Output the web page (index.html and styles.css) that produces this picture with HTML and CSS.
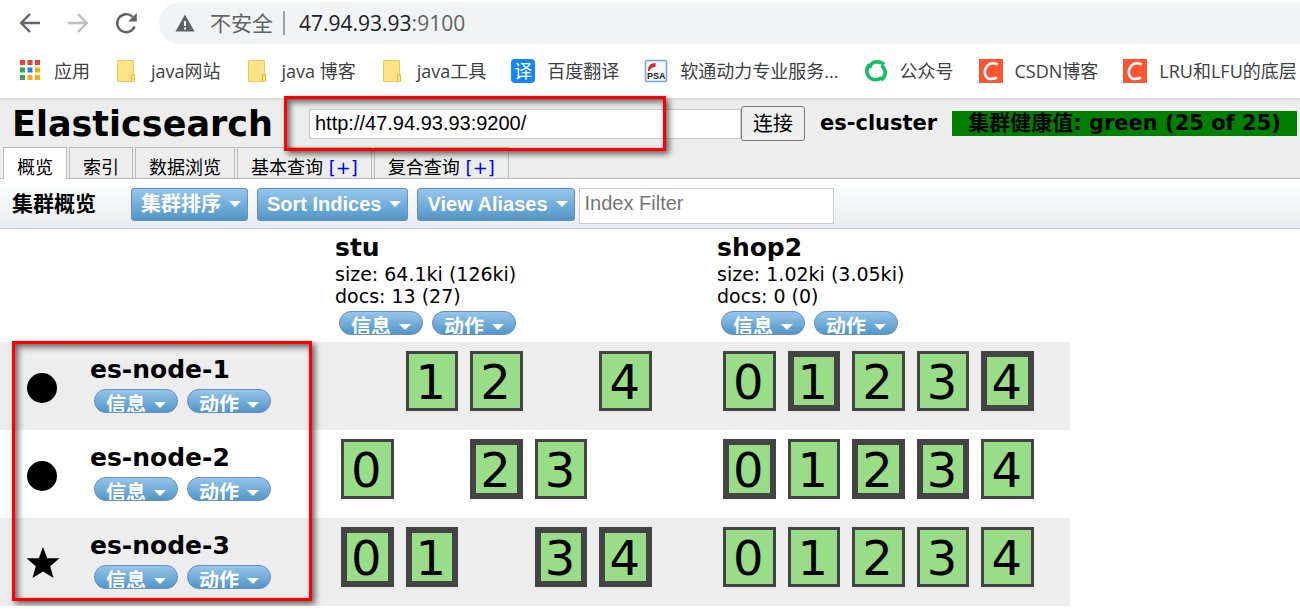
FILE: index.html
```html
<!DOCTYPE html>
<html lang="zh-CN">
<head>
    <meta charset="UTF-8">
    <meta name="viewport" content="width=device-width, initial-scale=1.0">
    <title>elasticsearch-head</title>
    <link rel="stylesheet" href="styles.css">
</head>
<body>
    <!-- Browser bars -->
    <div class="browser">
        <div class="nav-bar">
            <button class="nav-btn" aria-label="后退">
                <svg width="24" height="24" viewBox="0 0 24 24" fill="none" stroke="#5f6368" stroke-width="2.4"><path d="M22 12H3.5M12 3L3.2 12L12 21"/></svg>
            </button>
            <button class="nav-btn" aria-label="前进">
                <svg width="24" height="24" viewBox="0 0 24 24" fill="none" stroke="#bdbfc1" stroke-width="2.4"><path d="M2 12H20.5M12 3L20.8 12L12 21"/></svg>
            </button>
            <button class="nav-btn" aria-label="刷新">
                <svg width="24" height="24" viewBox="0 0 24 24" fill="none" stroke="#5f6368" stroke-width="2.4"><path d="M20.6 15.5A9 9 0 1 1 18.6 5.8"/><path d="M22.8 2V10.6H14.2Z" fill="#5f6368" stroke="none"/></svg>
            </button>
            <div class="address">
                <svg width="20" height="18" viewBox="0 0 20 18"><path d="M10 0.5L19.5 17.5H0.5Z" fill="#5f6368"/><path d="M9 7H11V12H9ZM9 13.5H11V15.5H9Z" fill="#f1f3f4"/></svg>
                <span class="insecure">不安全</span>
                <span class="host">47.94.93.93<span class="port">:9100</span></span>
            </div>
        </div>
        <nav class="bookmarks">
            <a href="#"><svg class="icon" viewBox="0 0 24 24"><path fill="#ea4335" d="M2 1h5v5H2zM9.500 1h5v5h-5zM17 1h5v5h-5z"/><path fill="#34a853" d="M2 8.500h5v5H2zM2 16h5v5H2z"/><path fill="#1a83f0" d="M9.500 8.500h5v5h-5z"/><path fill="#fbab05" d="M17 8.500h5v5h-5zM9.500 16h5v5h-5zM17 16h5v5h-5z"/></svg>应用</a>
            <a href="#"><svg class="icon" viewBox="0 0 24 24"><path fill="#ffe28a" stroke="#f0cd52" d="M2.500 1.500H18.500V15.500H19.500V22.500H2.500Z"/><path fill="none" stroke="#dfb72d" d="M16.500 22V17.500Q16.500 15.500 18 15.500Q19.500 15.500 19.500 17.500V22"/></svg>java网站</a>
            <a href="#"><svg class="icon" viewBox="0 0 24 24"><path fill="#ffe28a" stroke="#f0cd52" d="M2.500 1.500H18.500V15.500H19.500V22.500H2.500Z"/><path fill="none" stroke="#dfb72d" d="M16.500 22V17.500Q16.500 15.500 18 15.500Q19.500 15.500 19.500 17.500V22"/></svg>java 博客</a>
            <a href="#"><svg class="icon" viewBox="0 0 24 24"><path fill="#ffe28a" stroke="#f0cd52" d="M2.500 1.500H18.500V15.500H19.500V22.500H2.500Z"/><path fill="none" stroke="#dfb72d" d="M16.500 22V17.500Q16.500 15.500 18 15.500Q19.500 15.500 19.500 17.500V22"/></svg>java工具</a>
            <a href="#"><span class="icon translate">译</span>百度翻译</a>
            <a href="#"><svg class="icon" viewBox="0 0 24 24"><rect x="1.500" y="1.500" width="21" height="21" rx="2" fill="#f4f6f8" stroke="#6fa5dc" stroke-width="1.500"/><path fill="#d9232b" d="M4 12Q4 4 11.500 4V8Q6.500 8 5.500 12Z"/><text class="psa" x="3" y="20">PSA</text></svg>软通动力专业服务...</a>
            <a href="#"><svg class="icon" viewBox="0 0 24 24" fill="none" stroke="#0fbf60" stroke-width="3.600"><path d="M5.500 9Q7 3 13 2.800Q17 2.800 20 5.500"/><path d="M17.500 6.500Q21.500 10 21.200 14.500Q20.500 19 17 21"/><path d="M17.500 18.500Q12 22.500 7 19.500Q3 17 2.800 11.500Q3 8 6 5.500"/></svg>公众号</a>
            <a href="#"><svg class="icon" viewBox="0 0 24 24"><path fill="#fc5531" d="M0 0H24V24H0Z"/><path fill="none" stroke="#fff" stroke-width="2.600" d="M18.800 5.500Q12 2.500 8.500 6.500Q5 11 6 15Q7.500 20.500 13 19.800Q16 19.500 18 18.500"/></svg>CSDN博客</a>
            <a href="#"><svg class="icon" viewBox="0 0 24 24"><path fill="#fc5531" d="M0 0H24V24H0Z"/><path fill="none" stroke="#fff" stroke-width="2.600" d="M18.800 5.500Q12 2.500 8.500 6.500Q5 11 6 15Q7.500 20.500 13 19.800Q16 19.500 18 18.500"/></svg>LRU和LFU的底层</a>
        </nav>
    </div>

    <!-- Cluster connection and tabs -->
    <header class="header">
        <div class="connect">
            <h1>Elasticsearch</h1>
            <form class="connect-form">
                <input type="text" class="url" aria-label="URL" value="http://47.94.93.93:9200/">
                <button type="button" class="connect-btn">连接</button>
                <div class="mark mark-url"></div>
            </form>
            <span class="cluster-name">es-cluster</span>
            <span class="health">集群健康值: green (25 of 25)</span>
        </div>
        <nav class="tabs">
            <a href="#" class="tab active">概览</a>
            <a href="#" class="tab">索引</a>
            <a href="#" class="tab">数据浏览</a>
            <a href="#" class="tab">基本查询 <span class="plus">[+]</span></a>
            <a href="#" class="tab">复合查询 <span class="plus">[+]</span></a>
        </nav>
    </header>

    <div class="toolbar">
        <h2>集群概览</h2>
        <button class="menu-btn">集群排序</button>
        <button class="menu-btn">Sort Indices</button>
        <button class="menu-btn">View Aliases</button>
        <input type="text" class="filter" aria-label="Index Filter" placeholder="Index Filter">
    </div>

    <!-- Nodes and shards -->
    <main class="overview">
        <table class="cluster">
            <thead>
                <tr>
                    <td class="col-icon"></td>
                    <td class="col-node"></td>
                    <th class="col-index" scope="col">
                        <div class="name">stu</div>
                        <div class="stat">size: 64.1ki (126ki)</div>
                        <div class="stat">docs: 13 (27)</div>
                        <div class="pills"><button class="pill">信息</button><button class="pill">动作</button></div>
                    </th>
                    <th scope="col">
                        <div class="name">shop2</div>
                        <div class="stat">size: 1.02ki (3.05ki)</div>
                        <div class="stat">docs: 0 (0)</div>
                        <div class="pills"><button class="pill">信息</button><button class="pill">动作</button></div>
                    </th>
                </tr>
            </thead>
            <tbody>
                <tr>
                    <td class="state"><svg width="34" height="34" viewBox="0 0 34 34"><circle cx="16" cy="16" r="15"/></svg></td>
                    <th scope="row">
                        <div class="name">es-node-1</div>
                        <div class="pills"><button class="pill">信息</button><button class="pill">动作</button></div>
                    </th>
                    <td><div class="shards"><span></span><span class="shard">1</span><span class="shard">2</span><span></span><span class="shard">4</span></div></td>
                    <td><div class="shards"><span class="shard">0</span><span class="shard primary">1</span><span class="shard">2</span><span class="shard">3</span><span class="shard primary">4</span></div></td>
                </tr>
                <tr>
                    <td class="state"><svg width="34" height="34" viewBox="0 0 34 34"><circle cx="16" cy="16" r="15"/></svg></td>
                    <th scope="row">
                        <div class="name">es-node-2</div>
                        <div class="pills"><button class="pill">信息</button><button class="pill">动作</button></div>
                    </th>
                    <td><div class="shards"><span class="shard">0</span><span></span><span class="shard primary">2</span><span class="shard">3</span><span></span></div></td>
                    <td><div class="shards"><span class="shard primary">0</span><span class="shard">1</span><span class="shard primary">2</span><span class="shard primary">3</span><span class="shard">4</span></div></td>
                </tr>
                <tr>
                    <td class="state"><svg width="34" height="34" viewBox="0 0 34 34"><path d="M17 -1L21.200 10.200H33.500L24.200 18.200L27.500 30L17 23.500L6.500 30L9.800 18.200L0.500 10.200H12.800Z"/></svg></td>
                    <th scope="row">
                        <div class="name">es-node-3</div>
                        <div class="pills"><button class="pill">信息</button><button class="pill">动作</button></div>
                    </th>
                    <td><div class="shards"><span class="shard primary">0</span><span class="shard primary">1</span><span></span><span class="shard primary">3</span><span class="shard primary">4</span></div></td>
                    <td><div class="shards"><span class="shard">0</span><span class="shard">1</span><span class="shard">2</span><span class="shard">3</span><span class="shard">4</span></div></td>
                </tr>
            </tbody>
        </table>
        <div class="mark mark-nodes"></div>
    </main>
</body>
</html>
```
FILE: styles.css
```css
* {
    box-sizing: border-box;
}
body {
    margin: 0;
    background: #fff;
    color: #000;
    font-family: Verdana, "DejaVu Sans", "Noto Sans CJK SC", sans-serif;
    font-size: 18px;
    overflow: hidden;
}
h1, h2 {
    margin: 0;
}
a {
    color: inherit;
    text-decoration: none;
}
button {
    cursor: pointer;
}

/* Browser bars */
.browser {
    font-family: "Open Sans", "Noto Sans CJK SC", sans-serif;
    border-bottom: 2px solid #dadce0;
}
.nav-bar {
    display: flex;
    align-items: center;
    gap: 24px;
    padding: 2px 0 0 18px;
    height: 44px;
}
.nav-btn {
    width: 24px;
    height: 24px;
    padding: 0;
    border: none;
    background: none;
}
.nav-btn svg {
    display: block;
}
.address {
    flex: 1;
    display: flex;
    align-items: center;
    height: 42px;
    padding-left: 16px;
    margin-left: -3px;
    background: #f1f3f4;
    border-radius: 21px 0 0 21px;
    font-size: 21px;
    line-height: 24px;
    color: #202124;
}
.insecure {
    margin-left: 15px;
    padding-right: 10px;
    border-right: 2px solid #9aa0a6;
    color: #5f6368;
}
.host {
    margin-left: 14px;
}
.port {
    color: #5f6368;
}
.bookmarks {
    display: flex;
    gap: 25px;
    height: 54px;
    padding: 7px 0 0 18px;
    overflow: hidden;
    white-space: nowrap;
    font-size: 18px;
    line-height: 24px;
    color: #3c4043;
}
.bookmarks a {
    flex: none;
    display: flex;
    align-items: center;
    gap: 12px;
    height: 40px;
}
.icon {
    width: 24px;
    height: 24px;
}
.translate {
    border-radius: 4px;
    background: #1487f5;
    color: #fff;
    text-align: center;
}
.psa {
    font: bold 9px "Liberation Sans", sans-serif;
    fill: #222;
}

/* Header */
.header {
    background: #ededed;
}
.connect {
    display: flex;
    align-items: center;
    height: 47px;
    padding-left: 12px;
    white-space: nowrap;
}
h1 {
    width: 297px;
    font-size: 35px;
    line-height: 42px;
}
.connect-form {
    position: relative;
    display: flex;
    align-items: center;
    width: 496px;
}
.url {
    flex: 1;
    height: 30px;
    padding: 0 5px;
    border: 1px solid #ccc;
    font-family: "Liberation Sans", sans-serif;
    font-size: 20px;
}
.connect-btn {
    width: 64px;
    height: 35px;
    padding: 0;
    border: 1px solid #767676;
    border-radius: 3px;
    background: #efefef;
    font-family: "Liberation Sans", "Noto Sans CJK SC", sans-serif;
    font-size: 20px;
    line-height: 28px;
}
.cluster-name {
    margin: 0 15px;
    font-size: 21px;
    font-weight: bold;
    line-height: 25px;
}
.health {
    padding: 0 16px;
    background: #008000;
    font-size: 21px;
    font-weight: bold;
    line-height: 25px;
}
.tabs {
    display: flex;
    gap: 2px;
    padding-left: 3px;
    border-bottom: 1px solid #bbb;
}
.tab {
    height: 31px;
    padding: 8px 13px 0;
    border: 1px solid #bbb;
    border-bottom: none;
    line-height: 24px;
}
.tab.active {
    height: 32px;
    margin-bottom: -1px;
    background: #fff;
}
.plus {
    color: #00f;
}

/* Toolbar */
.toolbar {
    display: flex;
    align-items: flex-start;
    gap: 9px;
    height: 50px;
    padding: 9px 0 0 12px;
    border-bottom: 1px solid #ccc;
    background: linear-gradient(#fff, #e9ecef);
}
h2 {
    width: 110px;
    font-size: 21px;
    line-height: 32px;
}
.menu-btn, .pill {
    border: 1px solid #668dc6;
    background: linear-gradient(#96c6eb, #5296c7);
    color: #fff;
    font-family: "Liberation Sans", "Noto Sans CJK SC", sans-serif;
    font-size: 20px;
    font-weight: bold;
}
.menu-btn {
    height: 33px;
    padding: 0 6px 2px 9px;
    border-radius: 3px;
    line-height: 28px;
}
.menu-btn::after, .pill::after {
    content: "";
    display: inline-block;
    margin-left: 8px;
    border: 6px solid transparent;
    border-top-color: #fff;
    border-bottom: none;
    vertical-align: 4px;
}
.filter {
    width: 255px;
    height: 36px;
    margin-left: -5px;
    padding: 0 5px 6px;
    border: 1px solid #ccc;
    font-family: "Liberation Sans", sans-serif;
    font-size: 20px;
}
.filter::placeholder {
    color: #757575;
}

/* Cluster table */
.overview {
    position: relative;
}
.cluster {
    width: 1070px;
    table-layout: fixed;
    border-collapse: collapse;
}
.cluster td, .cluster th {
    padding: 0 8px;
    text-align: left;
    vertical-align: top;
}
.cluster thead tr {
    height: 113px;
}
.cluster tbody tr {
    height: 88px;
}
.cluster tbody tr:nth-child(odd) {
    background: #ededed;
}
.col-icon {
    width: 82px;
}
.col-node {
    width: 245px;
}
.col-index {
    width: 382px;
}
.name {
    font-size: 25px;
    line-height: 30px;
}
thead .name {
    padding-top: 4px;
}
tbody .name {
    padding-top: 13px;
}
.stat {
    font-size: 19px;
    font-weight: normal;
    line-height: 22px;
}
.pills {
    display: flex;
    gap: 9px;
    padding: 4px 4px 0;
}
.pill {
    width: 84px;
    height: 24px;
    padding: 3px 0 0;
    border-radius: 12px;
    line-height: 24px;
    overflow: hidden;
}
.cluster .state {
    padding: 30px 0 0 26px;
}
.state svg {
    display: block;
    overflow: visible;
}
.shards {
    display: grid;
    grid-template-columns: repeat(5, 1fr);
    gap: 12px;
    width: 311px;
    margin: 9px 6px 0;
}
.shard {
    height: 60px;
    border: 3px solid #444;
    background: #9d8;
    font-size: 48px;
    line-height: 56px;
    text-align: center;
    text-indent: -2px;
}
.shard.primary {
    border-width: 6px;
    line-height: 50px;
}

/* Red frames */
.mark {
    position: absolute;
    border: 3px solid #f00;
    box-shadow: 3px 3px 6px rgba(0, 0, 0, 0.6), inset 3px 3px 6px rgba(0, 0, 0, 0.6);
    pointer-events: none;
}
.mark-url {
    top: -10px;
    left: -25px;
    width: 382px;
    height: 55px;
}
.mark-nodes {
    top: 112px;
    left: 12px;
    width: 300px;
    height: 260px;
}
```
